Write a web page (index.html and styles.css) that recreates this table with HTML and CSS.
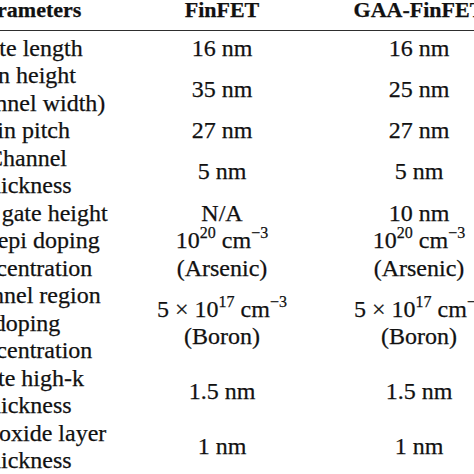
FILE: index.html
```html
<!DOCTYPE html>
<html lang="en">
<head>
<meta charset="utf-8">
<title>Device parameters</title>
<link rel="stylesheet" href="styles.css">
</head>
<body>
<div class="table">
  <div class="cell head"><span>Parameters</span></div>
  <div class="cell head"><span>FinFET</span></div>
  <div class="cell head"><span>GAA-FinFET</span></div>

  <div class="cell first"><span>Gate length</span></div>
  <div class="cell first"><span>16 nm</span></div>
  <div class="cell first"><span>16 nm</span></div>

  <div class="cell"><span>Fin height<br>(Channel width)</span></div>
  <div class="cell"><span>35 nm</span></div>
  <div class="cell"><span>25 nm</span></div>

  <div class="cell"><span>Fin pitch</span></div>
  <div class="cell"><span>27 nm</span></div>
  <div class="cell"><span>27 nm</span></div>

  <div class="cell"><span>Channel<br>thickness</span></div>
  <div class="cell"><span>5 nm</span></div>
  <div class="cell"><span>5 nm</span></div>

  <div class="cell"><span>Back gate height</span></div>
  <div class="cell"><span>N/A</span></div>
  <div class="cell"><span>10 nm</span></div>

  <div class="cell"><span>S/D epi doping<br>concentration</span></div>
  <div class="cell"><span>10<sup class="sup">20</sup> cm<sup class="sup">−3</sup><br>(Arsenic)</span></div>
  <div class="cell"><span>10<sup class="sup">20</sup> cm<sup class="sup">−3</sup><br>(Arsenic)</span></div>

  <div class="cell"><span>Channel region<br>doping<br>concentration</span></div>
  <div class="cell"><span>5 × 10<sup class="sup">17</sup> cm<sup class="sup">−3</sup><br>(Boron)</span></div>
  <div class="cell"><span>5 × 10<sup class="sup">17</sup> cm<sup class="sup">−3</sup><br>(Boron)</span></div>

  <div class="cell"><span>Gate high-k<br>thickness</span></div>
  <div class="cell"><span>1.5 nm</span></div>
  <div class="cell"><span>1.5 nm</span></div>

  <div class="cell"><span>Gate oxide layer<br>thickness</span></div>
  <div class="cell"><span>1 nm</span></div>
  <div class="cell"><span>1 nm</span></div>
</div>
</body>
</html>
```
FILE: styles.css
```css
html, body {
  margin: 0;
  padding: 0;
  background: #ffffff;
}
body {
  width: 474px;
  height: 474px;
  overflow: hidden;
  font-family: "Liberation Serif", "Tinos", "DejaVu Serif", serif;
  color: #111111;
  -webkit-text-stroke: 0.25px #111111;
}
.table {
  display: grid;
  grid-template-columns: 196px 194px 200px;
  margin-left: -71px;
  margin-top: -4px;
  width: 590px;
}
.cell {
  display: flex;
  flex-direction: column;
  justify-content: center;
  text-align: center;
  font-size: 24px;
  line-height: 27.5px;
  white-space: nowrap;
}
.head {
  font-size: 22px;
  font-weight: bold;
  padding-bottom: 6px;
  border-bottom: 1.6px solid #2e2e2e;
}
.first {
  padding-top: 4px;
}
.sup {
  font-size: 16px;
  line-height: 0;
  vertical-align: 10px;
}
```
